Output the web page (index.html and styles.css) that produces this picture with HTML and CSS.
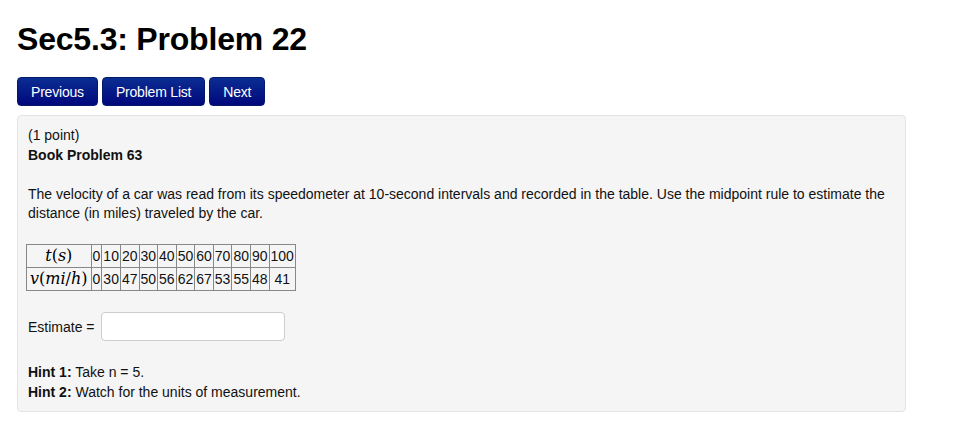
FILE: index.html
```html
<!DOCTYPE html>
<html>
<head>
<meta charset="utf-8">
<link rel="stylesheet" href="styles.css">
</head>
<body>
<h1 class="title">Sec5.3: Problem 22</h1>
<div class="nav">
  <a class="btn">Previous</a>
  <a class="btn">Problem List</a>
  <a class="btn">Next</a>
</div>
<div class="panel">
  <div class="line">(1 point)</div>
  <div class="line"><b>Book Problem 63</b></div>
  <p class="para">The velocity of a car was read from its speedometer at 10-second intervals and recorded in the table. Use the midpoint rule to estimate the distance (in miles) traveled by the car.</p>
  <table class="data">
    <tr>
      <td class="math"><i>t</i>(<i>s</i>)</td>
      <td>0</td><td>10</td><td>20</td><td>30</td><td>40</td><td>50</td><td>60</td><td>70</td><td>80</td><td>90</td><td>100</td>
    </tr>
    <tr>
      <td class="math"><i>v</i>(<i>mi</i>/<i>h</i>)</td>
      <td>0</td><td>30</td><td>47</td><td>50</td><td>56</td><td>62</td><td>67</td><td>53</td><td>55</td><td>48</td><td>41</td>
    </tr>
  </table>
  <div class="answer">
    <label class="lbl">Estimate =</label>
    <input class="field" type="text">
  </div>
  <div class="hints">
    <div class="line"><b>Hint 1:</b> Take n = 5.</div>
    <div class="line"><b>Hint 2:</b> Watch for the units of measurement.</div>
  </div>
</div>
</body>
</html>
```
FILE: styles.css
```css
html, body {
  margin: 0;
  padding: 0;
  background: #fff;
}
body {
  font-family: "Liberation Sans", Arial, sans-serif;
  color: #000;
  padding: 0 17px;
}
.title {
  margin: 0;
  padding-top: 19px;
  font-size: 32px;
  font-weight: bold;
  line-height: 40px;
  letter-spacing: -0.2px;
}
.nav {
  display: flex;
  gap: 4px;
  margin-top: 18px;
}
.btn {
  display: block;
  padding: 0 13px;
  height: 29px;
  line-height: 29px;
  box-sizing: border-box;
  font-size: 14px;
  color: #fff;
  background: linear-gradient(#0b2d92, #00087c);
  border: 1px solid #021a6a;
  border-radius: 4px;
  letter-spacing: -0.2px;
}
.panel {
  margin-top: 9px;
  width: 889px;
  box-sizing: border-box;
  background: #f5f5f5;
  border: 1px solid #e3e3e3;
  border-radius: 4px;
  padding: 9px 10px 9px 10px;
  font-size: 14px;
  line-height: 20px;
  color: #111;
}
.line { line-height: 20px; }
.para {
  margin: 20px 0 0 0;
  line-height: 19px;
}
.data {
  margin: 21px 0 0 -2px;
  border-collapse: collapse;
  border: 1px solid #333;
  font-size: 14px;
}
.data td {
  border: 1px solid #888;
  padding: 0 1px;
  height: 22px;
  text-align: center;
  line-height: 20px;
}
.data td.math {
  font-family: "DejaVu Serif", "Liberation Serif", serif;
  font-size: 16px;
  padding: 0 3px;
  color: #000;
}
.answer {
  display: flex;
  align-items: center;
  margin-top: 21px;
  gap: 6px;
}
.field {
  width: 184px;
  height: 29px;
  box-sizing: border-box;
  border: 1px solid #ccc;
  border-radius: 4px;
  background: #fff;
  margin: 0;
}
.hints {
  margin-top: 21px;
}
```
